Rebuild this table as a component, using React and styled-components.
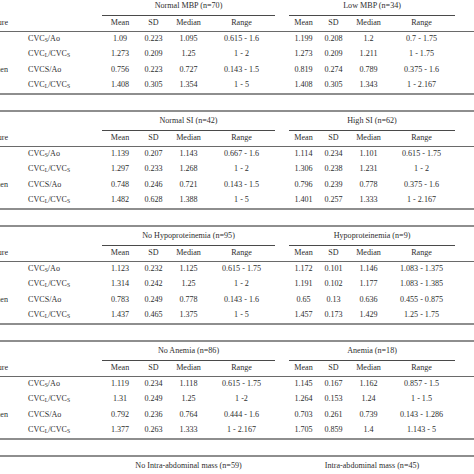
import React from "react";
import styled, { createGlobalStyle } from "styled-components";

const GlobalStyle = createGlobalStyle`
  html, body {
    margin: 0;
    padding: 0;
    background: #ffffff;
    overflow: hidden;
  }
  body {
    font-family: "Liberation Serif", "Times New Roman", serif;
    color: #2e2e2e;
  }
`;

const Page = styled.div`
  width: 474px;
  height: 474px;
  overflow: hidden;
  background: #ffffff;
`;

const Stack = styled.div`
  width: 574px;
  margin-top: -5px;
  margin-left: -50px;
  display: flex;
  flex-direction: column;
  gap: 15px;
`;

const Section = styled.section`
  border-top: 2px solid #8e8e8e;
  border-bottom: 2px solid #8e8e8e;
`;

const Grid = styled.table`
  width: 574px;
  table-layout: fixed;
  border-collapse: collapse;
  border-spacing: 0;
  font-size: 8.1px;
  line-height: 1;
`;

const TitleRow = styled.tr`
  height: 18px;
`;

const TitleCell = styled.th`
  padding: 0;
  font-weight: normal;
  text-align: center;
  vertical-align: middle;
  white-space: nowrap;
  border-bottom: ${(p) => (p.$line ? "1px solid #4a4a4a" : "none")};
`;

const HeadRow = styled.tr`
  height: 16px;
  border-bottom: 1px solid #6a6a6a;
`;

const DataRow = styled.tr`
  height: 15.5px;
`;

const Cell = styled.td`
  padding: 0;
  text-align: ${(p) => p.$align || "center"};
  padding-right: ${(p) => (p.$align === "right" ? "20px" : "0")};
  vertical-align: middle;
  white-space: nowrap;
  font-weight: normal;
`;

const HeadCell = styled(Cell).attrs({ as: "th" })``;

const Sub = styled.sub`
  font-size: 0.7em;
  vertical-align: -0.2em;
  line-height: 0;
`;

const widths = [78, 74, 36, 31, 39, 67, 14, 29, 31, 39, 67, 69];

const params = [
  <>CVC<Sub>S</Sub>/Ao</>,
  <>CVC<Sub>L</Sub>/CVC<Sub>S</Sub></>,
  <>CVCS/Ao</>,
  <>CVC<Sub>L</Sub>/CVC<Sub>S</Sub></>,
];

const sections = [
  {
    left: "Normal MBP (n=70)",
    right: "Low MBP (n=34)",
    rows: [
      ["1.09", "0.223", "1.095", "0.615 - 1.6", "1.199", "0.208", "1.2", "0.7 - 1.75"],
      ["1.273", "0.209", "1.25", "1 - 2", "1.273", "0.209", "1.211", "1 - 1.75"],
      ["0.756", "0.223", "0.727", "0.143 - 1.5", "0.819", "0.274", "0.789", "0.375 - 1.6"],
      ["1.408", "0.305", "1.354", "1 - 5", "1.408", "0.305", "1.343", "1 - 2.167"],
    ],
  },
  {
    left: "Normal SI (n=42)",
    right: "High SI (n=62)",
    rows: [
      ["1.139", "0.207", "1.143", "0.667 - 1.6", "1.114", "0.234", "1.101", "0.615 - 1.75"],
      ["1.297", "0.233", "1.268", "1 - 2", "1.306", "0.238", "1.231", "1 - 2"],
      ["0.748", "0.246", "0.721", "0.143 - 1.5", "0.796", "0.239", "0.778", "0.375 - 1.6"],
      ["1.482", "0.628", "1.388", "1 - 5", "1.401", "0.257", "1.333", "1 - 2.167"],
    ],
  },
  {
    left: "No Hypoproteinemia (n=95)",
    right: "Hypoproteinemia (n=9)",
    rows: [
      ["1.123", "0.232", "1.125", "0.615 - 1.75", "1.172", "0.101", "1.146", "1.083 - 1.375"],
      ["1.314", "0.242", "1.25", "1 - 2", "1.191", "0.102", "1.177", "1.083 - 1.385"],
      ["0.783", "0.249", "0.778", "0.143 - 1.6", "0.65", "0.13", "0.636", "0.455 - 0.875"],
      ["1.437", "0.465", "1.375", "1 - 5", "1.457", "0.173", "1.429", "1.25 - 1.75"],
    ],
  },
  {
    left: "No Anemia (n=86)",
    right: "Anemia (n=18)",
    rows: [
      ["1.119", "0.234", "1.118", "0.615 - 1.75", "1.145", "0.167", "1.162", "0.857 - 1.5"],
      ["1.31", "0.249", "1.25", "1 -2", "1.264", "0.153", "1.24", "1 - 1.5"],
      ["0.792", "0.236", "0.764", "0.444 - 1.6", "0.703", "0.261", "0.739", "0.143 - 1.286"],
      ["1.377", "0.263", "1.333", "1 - 2.167", "1.705", "0.859", "1.4", "1.143 - 5"],
    ],
  },
  {
    left: "No Intra-abdominal mass (n=59)",
    right: "Intra-abdominal mass (n=45)",
    rows: [],
  },
];

const stats = ["Mean", "SD", "Median", "Range"];

function StatTable({ left, right, rows }) {
  return (
    <Section>
      <Grid>
        <colgroup>
          {widths.map((w, i) => (
            <col key={i} style={{ width: `${w}px` }} />
          ))}
        </colgroup>
        <thead>
          <TitleRow>
            <TitleCell />
            <TitleCell />
            <TitleCell colSpan={4} $line>
              {left}
            </TitleCell>
            <TitleCell />
            <TitleCell colSpan={4} $line>
              {right}
            </TitleCell>
            <TitleCell />
          </TitleRow>
          <HeadRow>
            <HeadCell $align="right">Measure</HeadCell>
            <HeadCell />
            {stats.map((s) => (
              <HeadCell key={`l${s}`}>{s}</HeadCell>
            ))}
            <HeadCell />
            {stats.map((s) => (
              <HeadCell key={`r${s}`}>{s}</HeadCell>
            ))}
            <HeadCell />
          </HeadRow>
        </thead>
        <tbody>
          {rows.map((r, i) => (
            <DataRow key={i}>
              <Cell $align="right">{i === 2 ? "Abdomen" : ""}</Cell>
              <Cell $align="left">{params[i]}</Cell>
              {r.slice(0, 4).map((v, j) => (
                <Cell key={`a${j}`}>{v}</Cell>
              ))}
              <Cell />
              {r.slice(4).map((v, j) => (
                <Cell key={`b${j}`}>{v}</Cell>
              ))}
              <Cell />
            </DataRow>
          ))}
        </tbody>
      </Grid>
    </Section>
  );
}

export default function App() {
  return (
    <Page>
      <GlobalStyle />
      <Stack>
        {sections.map((s) => (
          <StatTable key={s.left} {...s} />
        ))}
      </Stack>
    </Page>
  );
}
